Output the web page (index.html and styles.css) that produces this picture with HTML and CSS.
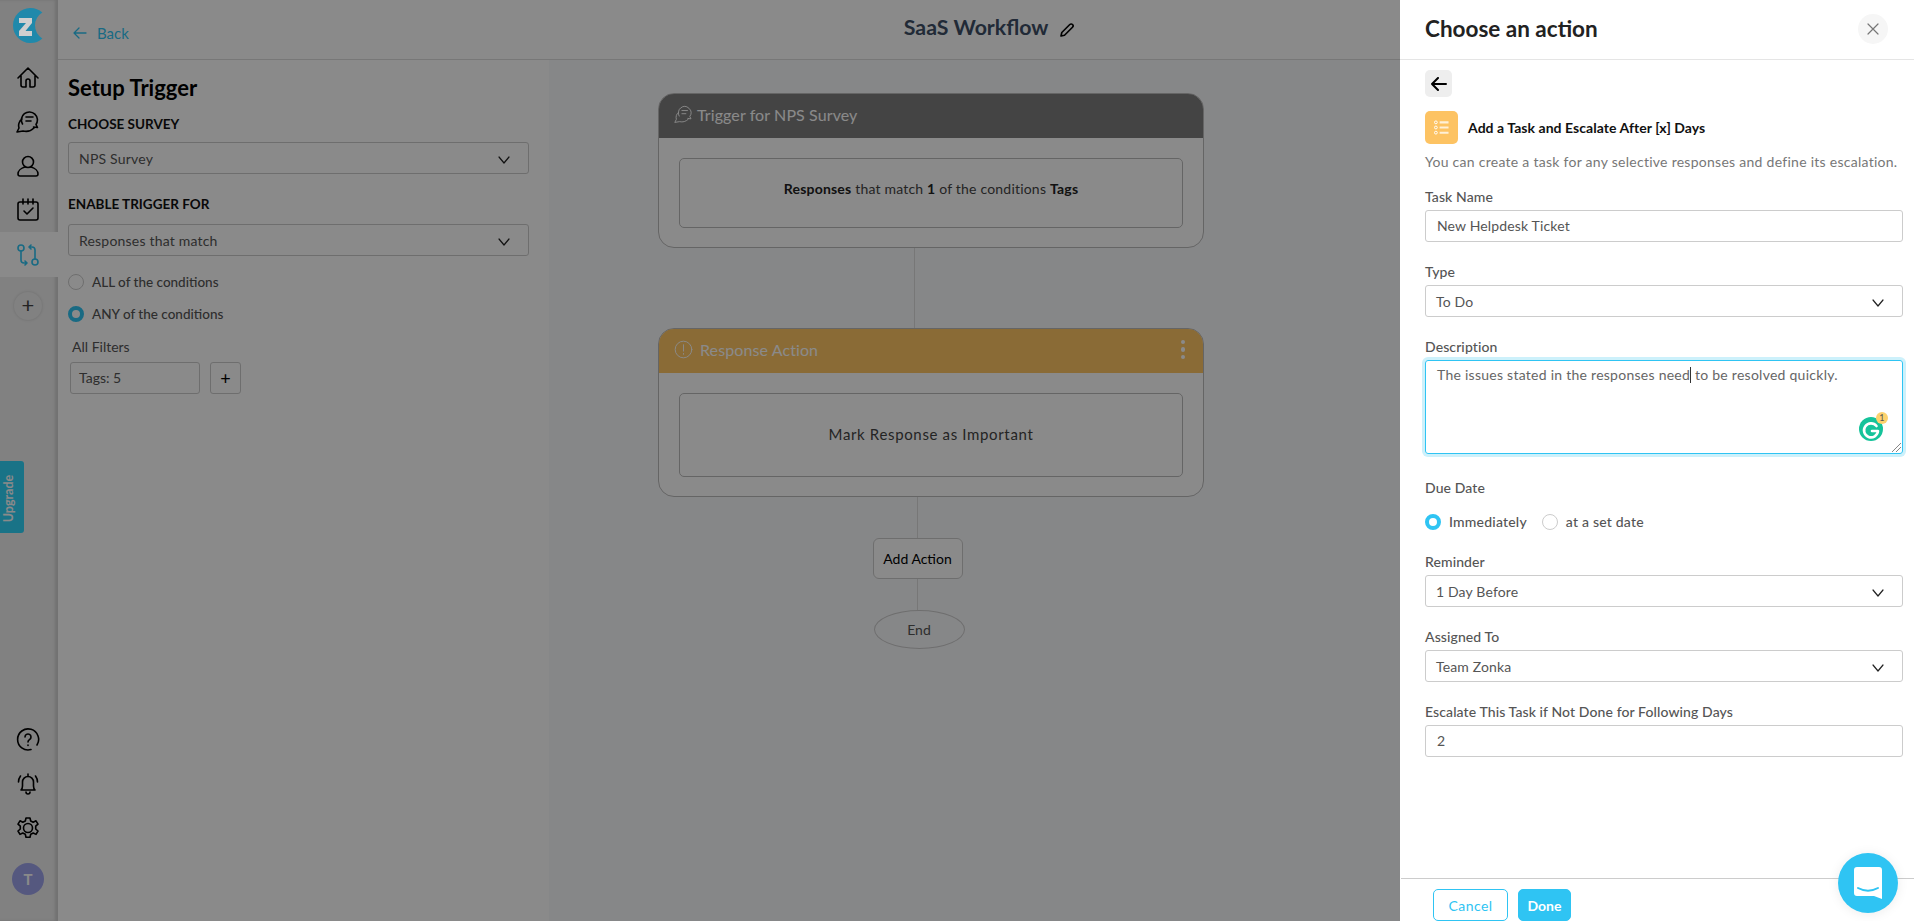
FILE: index.html
```html
<!DOCTYPE html>
<html lang="en">
<head>
    <meta charset="UTF-8">
    <title>SaaS Workflow</title>
    <link rel="stylesheet" href="styles.css">
</head>
<body>
    <div class="app">
        <nav class="rail">
            <svg class="logo" viewBox="0 0 36 36">
                <path d="M31.33 5.6A17.5 17.5 0 1 0 31.33 31.4A15 15 0 0 1 31.33 5.6Z" fill="#2089ab"/>
                <path d="M8 11H21V16L14.500 24H21V29H8V24L15 16H8Z" fill="#cfcfcf"/>
            </svg>
            <div class="rail-top">
                <a class="rail-item"><svg viewBox="0 0 24 24"><path d="M2 12 12 2l10 10M5 10v9a2 2 0 0 0 2 2h3v-6a2 2 0 0 1 4 0v6h3a2 2 0 0 0 2-2v-9"/></svg></a>
                <a class="rail-item"><svg viewBox="0 0 24 24"><path d="M6.500 14A8 8 0 1 1 20 14.500l1.500 3-4-.5M10 7h7M10 11h5M6 9C3 11 2 15 3 18l-2 4 6-1c4 1 8 0 11-3"/></svg></a>
                <a class="rail-item"><svg viewBox="0 0 24 24"><circle cx="12" cy="8" r="5.500"/><path d="M9 13c-4 1-7 4-7 7 0 1 1 2 2 2h16c1 0 2-1 2-2 0-3-3-6-7-7"/></svg></a>
                <a class="rail-item"><svg viewBox="0 0 24 24"><rect x="2" y="4" width="20" height="18" rx="2"/><path d="M7 1v5M12 1v5M17 1v5M8 13l3 3 6-6"/></svg></a>
                <a class="rail-item active"><svg viewBox="0 0 24 24"><circle cx="5" cy="5" r="3"/><circle cx="19" cy="19" r="3"/><path d="M5 8v9a3 3 0 0 0 3 3h3l-2-2M9 22l2-2M19 16V7a3 3 0 0 0-3-3h-3l2 2M15 2l-2 2"/></svg></a>
                <div class="rail-add">+</div>
            </div>
            <div class="rail-bottom">
                <a class="rail-item"><svg viewBox="0 0 24 24"><path d="M21 17a10.500 10.500 0 1 0-6 4.500"/><path d="M9 9a3 3 0 1 1 4.500 2.600c-1 .6-1.500 1.200-1.500 2.400M12 17v.5"/></svg></a>
                <a class="rail-item"><svg viewBox="0 0 24 24"><path d="M5 18c1-1 1.500-2 1.500-4V10a5.500 5.500 0 0 1 11 0v4c0 2 .5 3 1.500 4zM12 2v2M10 20a2 2 0 0 0 4 0M4.500 4C3 6 2.500 8 2.500 10M19.500 4C21 6 21.500 8 21.500 10"/></svg></a>
                <a class="rail-item"><svg viewBox="0 0 24 24"><circle cx="12" cy="12" r="4.500"/><path d="M10 2h4l.7 3 2.500 1.200 2.800-1.400 2 3.400-2.300 2 0 2.800 2.300 2-2 3.400-2.800-1.400-2.500 1.200-.7 3h-4l-.7-3-2.500-1.200-2.800 1.400-2-3.400 2.300-2 0-2.800-2.300-2 2-3.400 2.800 1.400L9.300 5z"/></svg></a>
                <div class="avatar">T</div>
            </div>
        </nav>
        <div class="upgrade"><span>Upgrade</span></div>

        <div class="main">
            <header class="topbar">
                <a class="back">
                    <svg viewBox="0 0 14 14"><path d="M13 7H1M6 2 1 7l5 5"/></svg>
                    <span>Back</span>
                </a>
                <h1 class="workflow-name">SaaS Workflow</h1>
                <svg class="pen" viewBox="0 0 14 14"><path d="M1 13l.8-3.500L9.800 1.500a1.500 1.500 0 0 1 2.700 2.700L4.500 12.200z"/></svg>
            </header>
            <div class="content">
                <aside class="setup">
                    <h2>Setup Trigger</h2>
                    <div class="setup-label">CHOOSE SURVEY</div>
                    <div class="select">NPS Survey<svg class="chev" viewBox="0 0 12 8"><path d="M1 1l5 6 5-6"/></svg></div>
                    <div class="setup-label second">ENABLE TRIGGER FOR</div>
                    <div class="select">Responses that match<svg class="chev" viewBox="0 0 12 8"><path d="M1 1l5 6 5-6"/></svg></div>
                    <div class="radio-group">
                        <div class="radio-row"><i class="radio"></i>ALL of the conditions</div>
                        <div class="radio-row"><i class="radio on"></i>ANY of the conditions</div>
                    </div>
                    <div class="filters-title">All Filters</div>
                    <div class="filters">
                        <div class="tag-box">Tags: 5</div>
                        <div class="tag-add">+</div>
                    </div>
                </aside>
                <section class="canvas">
                    <div class="node">
                        <div class="node-head dark">
                            <svg viewBox="0 0 24 24"><path d="M6.500 14A8 8 0 1 1 20 14.500l1.500 3-4-.5M10 7h7M10 11h5M6 9C3 11 2 15 3 18l-2 4 6-1c4 1 8 0 11-3"/></svg>
                            Trigger for NPS Survey
                        </div>
                        <div class="node-body">
                            <div class="node-box short"><span><b>Responses</b> that match <b>1</b> of the conditions <b>Tags</b></span></div>
                        </div>
                    </div>
                    <div class="line line-a"></div>
                    <div class="node">
                        <div class="node-head amber">
                            <svg viewBox="0 0 24 24"><circle cx="12" cy="12" r="10.500"/><path d="M12 6v8M12 17v1"/></svg>
                            Response Action
                            <div class="dots"><i></i><i></i><i></i></div>
                        </div>
                        <div class="node-body">
                            <div class="node-box tall">Mark Response as Important</div>
                        </div>
                    </div>
                    <div class="tail">
                        <div class="line line-b"></div>
                        <div class="add-action">Add Action</div>
                        <div class="line line-c"></div>
                        <div class="end">End</div>
                    </div>
                </section>
            </div>
        </div>
    </div>

    <div class="overlay"></div>

    <aside class="drawer">
        <div class="drawer-head">
            <h2>Choose an action</h2>
            <div class="close"><svg viewBox="0 0 12 12"><path d="M1 1l10 10M11 1 1 11"/></svg></div>
        </div>
        <div class="drawer-body">
            <div class="back-btn"><svg viewBox="0 0 16 14"><path d="M15 7H1M7 1 1 7l6 6"/></svg></div>
            <div class="action-title">
                <div class="action-icon">
                    <svg viewBox="0 0 16 16"><circle cx="2" cy="2.500" r="1.500"/><circle cx="2" cy="8" r="1.500"/><circle cx="2" cy="13.500" r="1.500"/><path class="list-bars" d="M6 2.500h9.500M6 8h9.500M6 13.500h9.500"/></svg>
                </div>
                <span>Add a Task and Escalate After [x] Days</span>
            </div>
            <p class="action-desc">You can create a task for any selective responses and define its escalation.</p>

            <label class="field-label">Task Name</label>
            <div class="input">New Helpdesk Ticket</div>

            <label class="field-label">Type</label>
            <div class="select wide">To Do<svg class="chev" viewBox="0 0 12 8"><path d="M1 1l5 6 5-6"/></svg></div>

            <label class="field-label">Description</label>
            <div class="textarea">
                The issues stated in the responses need<i class="caret"></i> to be resolved quickly.
                <div class="grammarly">
                    <svg viewBox="0 0 24 24"><circle cx="12" cy="12" r="12" fill="#15c39a"/><path d="M17.500 9A7 7 0 1 0 19 14h-6" fill="none" stroke="#fff" stroke-width="2.600"/></svg>
                    <span>1</span>
                </div>
                <svg class="resizer" viewBox="0 0 9 9"><path d="M0 9l9-9M4 9l5-5"/></svg>
            </div>

            <label class="field-label due">Due Date</label>
            <div class="due-row">
                <div class="due-opt"><i class="radio on"></i>Immediately</div>
                <div class="due-opt"><i class="radio"></i>at a set date</div>
            </div>

            <label class="field-label">Reminder</label>
            <div class="select wide">1 Day Before<svg class="chev" viewBox="0 0 12 8"><path d="M1 1l5 6 5-6"/></svg></div>

            <label class="field-label">Assigned To</label>
            <div class="select wide">Team Zonka<svg class="chev" viewBox="0 0 12 8"><path d="M1 1l5 6 5-6"/></svg></div>

            <label class="field-label">Escalate This Task if Not Done for Following Days</label>
            <div class="input">2</div>
        </div>
        <div class="drawer-foot">
            <button class="btn-cancel">Cancel</button>
            <button class="btn-done">Done</button>
        </div>
    </aside>

    <div class="chat-bubble">
        <svg viewBox="0 0 28 32"><path d="M3 0h22a3 3 0 0 1 3 3v29l-8-3H3a3 3 0 0 1-3-3V3a3 3 0 0 1 3-3z" fill="#fff"/><path d="M4 21c6 3.500 14 3.500 20 0" fill="none" stroke="#2fc4f3" stroke-width="2"/></svg>
    </div>
</body>
</html>
```

FILE: styles.css
```css
* {
    box-sizing: border-box;
}
body {
    margin: 0;
    height: 100vh;
    overflow: hidden;
    font-family: Lato, "Noto Sans", sans-serif;
    font-size: 14px;
    color: #333;
    background-color: #fff;
}
h1, h2, p {
    margin: 0;
}
svg {
    fill: none;
    stroke: currentColor;
    stroke-width: 1.6;
    stroke-linecap: round;
    stroke-linejoin: round;
}

.app {
    display: flex;
    height: 100vh;
}

/* left rail */
.rail {
    width: 58px;
    flex-shrink: 0;
    display: flex;
    flex-direction: column;
    align-items: center;
    background-color: #eee;
    box-shadow: inset -3px 0 3px rgba(0, 0, 0, 0.12);
    position: relative;
}
.logo {
    width: 36px;
    height: 36px;
    margin-top: 7px;
    stroke: none;
    position: relative;
    z-index: 6;
}
.rail-top {
    width: 100%;
    margin-top: 13px;
}
.rail-item {
    display: flex;
    justify-content: center;
    align-items: center;
    height: 44px;
    padding-right: 2px;
    color: #000;
}
.rail-item svg {
    width: 24px;
    height: 24px;
}
.rail-item.active {
    background-color: #fff;
    color: #2fc4f3;
    height: 45px;
}
.rail-add {
    width: 28px;
    height: 28px;
    margin: 15px 0 0 14px;
    border-radius: 50%;
    background-color: #eee;
    box-shadow: 0 0 3px rgba(0, 0, 0, 0.15);
    text-align: center;
    line-height: 26px;
    font-size: 22px;
    color: #444;
}
.rail-bottom {
    margin-top: auto;
    width: 100%;
    display: flex;
    flex-direction: column;
    align-items: center;
    padding-bottom: 26px;
}
.rail-bottom .rail-item {
    width: 100%;
}
.avatar {
    width: 32px;
    height: 32px;
    margin: 13px 2px 0 0;
    border-radius: 50%;
    background-color: #9ea3eb;
    color: #fff;
    text-align: center;
    line-height: 32px;
    font-weight: 700;
    font-size: 15px;
}
.upgrade {
    position: absolute;
    left: 0;
    top: 461px;
    z-index: 2;
    width: 24px;
    height: 72px;
    padding: 3px 6px 0 0;
    background-color: #2fd4fa;
    border-radius: 0 3px 3px 0;
    display: flex;
    align-items: center;
    justify-content: center;
    color: #fff;
    font-size: 12.5px;
    font-weight: 700;
}
.upgrade span {
    transform: rotate(-90deg);
}

/* top bar */
.main {
    flex: 1;
    display: flex;
    flex-direction: column;
    min-width: 0;
}
.topbar {
    height: 60px;
    flex-shrink: 0;
    display: flex;
    align-items: center;
    padding-left: 15px;
    border-bottom: 1px solid #ddd;
    background-color: #fff;
}
.back {
    display: flex;
    align-items: center;
    gap: 10px;
    color: #2fc4f3;
    font-size: 15px;
    margin-top: 6px;
}
.back svg {
    width: 14px;
    height: 14px;
    stroke-width: 1.3;
}
.workflow-name {
    margin-left: 775px;
    font-size: 21.3px;
    font-weight: 700;
    color: #3d4f66;
    white-space: nowrap;
    margin-top: -6px;
}
.pen {
    width: 14px;
    height: 14px;
    margin-left: 12px;
    color: #000;
}

.content {
    flex: 1;
    display: flex;
}

/* setup panel */
.setup {
    width: 491px;
    flex-shrink: 0;
    padding: 0 20px 0 10px;
    background-color: #fff;
}
.setup h2 {
    font-size: 22px;
    font-weight: 700;
    color: #000;
    line-height: 28px;
    margin-top: 14px;
}
.setup-label {
    margin-top: 13px;
    margin-bottom: 9px;
    line-height: 18px;
    font-size: 13.5px;
    font-weight: 700;
    color: #111;
}
.setup-label.second {
    margin-top: 21px;
    margin-bottom: 11px;
}
.select {
    display: flex;
    justify-content: space-between;
    align-items: center;
    height: 32px;
    padding: 0 18px 0 10px;
    border: 1px solid #ccc;
    border-radius: 3px;
    background-color: #fff;
    color: #555;
    letter-spacing: 0.2px;
}
.select.wide {
    letter-spacing: 0.15px;
}
.chev {
    width: 12px;
    height: 8px;
    color: #222;
    stroke-width: 1.2;
    margin-top: 3px;
}
.radio-group {
    margin-top: 10px;
}
.radio-row {
    display: flex;
    align-items: center;
    gap: 8px;
    height: 32px;
    color: #555;
    font-weight: 500;
    font-size: 13.5px;
}
.radio {
    width: 16px;
    height: 16px;
    border-radius: 50%;
    border: 1px solid #ccc;
    background-color: #fff;
    flex-shrink: 0;
}
.radio.on {
    border: 4.5px solid #2fc4f3;
}
.filters-title {
    margin: 8px 0 0 4px;
    line-height: 18px;
    color: #555;
}
.filters {
    display: flex;
    gap: 10px;
    margin: 6px 0 0 2px;
}
.tag-box {
    width: 130px;
    height: 32px;
    padding-left: 8px;
    border: 1px solid #ccc;
    border-radius: 3px;
    line-height: 30px;
    color: #555;
}
.tag-add {
    width: 31px;
    height: 32px;
    border: 1px solid #ccc;
    border-radius: 3px;
    text-align: center;
    line-height: 30px;
    font-size: 18px;
    color: #000;
}

/* workflow canvas */
.canvas {
    flex: 1;
    display: flex;
    flex-direction: column;
    padding: 33px 0 0 109px;
    background-color: #f8f9fc;
}
.node {
    width: 546px;
    border: 1px solid #bbb;
    border-radius: 16px;
    background-color: #fff;
    overflow: hidden;
    flex-shrink: 0;
}
.node-head {
    display: flex;
    align-items: center;
    gap: 4px;
    height: 44px;
    padding: 0 0 3px 15px;
    color: #fff;
    font-size: 16px;
    letter-spacing: 0.1px;
}
.node-head svg {
    width: 19px;
    height: 19px;
    stroke-width: 1.2;
}
.node-head.dark {
    background-color: #7e7e7e;
}
.node-head.amber {
    background-color: #ffc664;
    gap: 7px;
}
.dots {
    margin-left: auto;
    margin-right: 18px;
    display: flex;
    flex-direction: column;
    gap: 3px;
}
.dots i {
    width: 4.5px;
    height: 4.5px;
    border-radius: 50%;
    background-color: #fff;
}
.node-body {
    padding: 20px 20px 19px;
}
.node-box {
    display: flex;
    justify-content: center;
    align-items: center;
    border: 1px solid #bbb;
    border-radius: 5px;
    color: #444;
}
.node-box.short {
    height: 70px;
    padding-bottom: 10px;
    letter-spacing: 0.2px;
}
.node-box.tall {
    height: 84px;
    font-size: 15px;
    letter-spacing: 0.65px;
    padding-bottom: 2px;
}
.node-box b {
    font-weight: 700;
    color: #222;
}
.line {
    width: 1px;
    background-color: #ddd;
}
.line-a {
    height: 80px;
    margin-left: 256px;
}
.tail {
    width: 91px;
    margin-left: 214px;
    display: flex;
    flex-direction: column;
    align-items: center;
}
.line-b {
    height: 41px;
}
.line-c {
    height: 31px;
}
.add-action {
    width: 90px;
    height: 41px;
    border: 1px solid #ccc;
    border-radius: 6px;
    background-color: #fff;
    text-align: center;
    line-height: 39px;
    color: #000;
}
.end {
    flex-shrink: 0;
    width: 91px;
    height: 39px;
    margin-left: 3px;
    border: 1px solid #ccc;
    border-radius: 50%;
    text-align: center;
    line-height: 37px;
    color: #555;
}

.overlay {
    position: fixed;
    inset: 0 514px 0 0;
    background-color: rgba(0, 0, 0, 0.46);
    z-index: 5;
}

/* action drawer */
.drawer {
    position: fixed;
    top: 0;
    right: 0;
    bottom: 0;
    width: 514px;
    z-index: 6;
    display: flex;
    flex-direction: column;
    background-color: #fff;
}
.drawer-head {
    height: 60px;
    flex-shrink: 0;
    display: flex;
    justify-content: space-between;
    align-items: center;
    padding: 0 26px 2px 25px;
    border-bottom: 1px solid #e5e5e5;
}
.drawer-head h2 {
    font-size: 22.5px;
    font-weight: 700;
    color: #222;
}
.close {
    width: 30px;
    height: 30px;
    border-radius: 50%;
    background-color: #f6f6f6;
    display: flex;
    justify-content: center;
    align-items: center;
    color: #777;
}
.close svg {
    width: 12px;
    height: 12px;
    stroke-width: 1.2;
}
.drawer-body {
    flex: 1;
    padding: 10px 11px 0 25px;
}
.back-btn {
    width: 27px;
    height: 27px;
    border-radius: 5px;
    background-color: #eee;
    display: flex;
    justify-content: center;
    align-items: center;
    color: #000;
}
.back-btn svg {
    width: 16px;
    height: 14px;
    stroke-width: 2;
}
.action-title {
    display: flex;
    align-items: center;
    gap: 10px;
    margin-top: 14px;
    font-size: 14px;
    font-weight: 700;
    letter-spacing: 0.05px;
    color: #111;
}
.action-icon {
    width: 33px;
    height: 33px;
    border-radius: 5px;
    background-color: #fdc363;
    display: flex;
    justify-content: center;
    align-items: center;
    color: #fff;
}
.action-icon svg {
    width: 15px;
    height: 15px;
    stroke-width: 1;
    stroke-linecap: butt;
}
.action-icon .list-bars {
    stroke-width: 2.2;
    opacity: 0.75;
}
.action-desc {
    margin-top: 9px;
    line-height: 18px;
    color: #777;
    letter-spacing: 0.27px;
}
.field-label {
    display: block;
    margin-top: 21px;
    margin-bottom: 4px;
    line-height: 18px;
    color: #555;
    font-weight: 500;
    letter-spacing: 0.1px;
}
.action-desc + .field-label {
    margin-top: 17px;
}
.input {
    height: 32px;
    padding-left: 11px;
    border: 1px solid #ccc;
    border-radius: 3px;
    line-height: 30px;
    color: #555;
    letter-spacing: 0.15px;
}
.textarea {
    position: relative;
    height: 94px;
    padding: 4px 11px;
    border: 1px solid #2fc4f3;
    border-radius: 3px;
    box-shadow: 0 0 0 3px #cdf1fb;
    line-height: 20px;
    color: #666;
    letter-spacing: 0.26px;
}
.caret {
    display: inline-block;
    width: 1px;
    height: 16px;
    background-color: #333;
    vertical-align: -3px;
}
.grammarly {
    position: absolute;
    right: 19px;
    bottom: 12px;
    width: 24px;
    height: 24px;
}
.grammarly svg {
    width: 24px;
    height: 24px;
    display: block;
    stroke: none;
}
.grammarly span {
    position: absolute;
    top: -5px;
    right: -5px;
    width: 12px;
    height: 12px;
    border-radius: 50%;
    background-color: #fdd26e;
    color: #555;
    font-size: 9px;
    line-height: 12px;
    text-align: center;
}
.resizer {
    position: absolute;
    right: 1px;
    bottom: 1px;
    width: 9px;
    height: 9px;
    color: #666;
    stroke-width: 0.8;
}
.field-label.due {
    margin-top: 25px;
}
.due-row {
    display: flex;
    gap: 15px;
    margin-top: 14px;
}
.due-opt {
    display: flex;
    align-items: center;
    gap: 8px;
    height: 21px;
    color: #555;
    font-weight: 500;
    letter-spacing: 0.2px;
}
.drawer-foot {
    height: 43px;
    flex-shrink: 0;
    display: flex;
    gap: 10px;
    padding: 10px 0 0 32px;
    border-top: 1px solid #ccc;
    margin-left: 1px;
}
.btn-cancel, .btn-done {
    height: 32px;
    border-radius: 5px;
    font-family: inherit;
    font-size: 14px;
    padding: 0;
}
.btn-cancel {
    width: 75px;
    background-color: #fff;
    border: 1px solid #2fc4f3;
    color: #2fc4f3;
    letter-spacing: 0.4px;
}
.btn-done {
    width: 53px;
    background-color: #2fc4f3;
    border: 1px solid #2fc4f3;
    color: #fff;
    font-weight: 700;
}
.chat-bubble {
    position: fixed;
    right: 16px;
    bottom: 8px;
    z-index: 7;
    width: 60px;
    height: 60px;
    border-radius: 50%;
    background-color: #2fc4f3;
    box-shadow: 0 1px 12px rgba(0, 0, 0, 0.08);
    display: flex;
    justify-content: center;
    align-items: center;
}
.chat-bubble svg {
    width: 28px;
    height: 32px;
    stroke: none;
}
```
